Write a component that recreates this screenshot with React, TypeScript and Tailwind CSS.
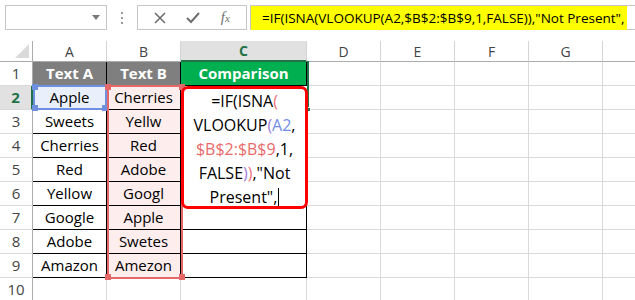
import React from 'react';

const aCol = ['Apple', 'Sweets', 'Cherries', 'Red', 'Yellow', 'Google', 'Adobe', 'Amazon'];
const bCol = ['Cherries', 'Yellw', 'Red', 'Adobe', 'Googl', 'Apple', 'Swetes', 'Amezon'];
const tail = ['D', 'E', 'F', 'G'];

function Corner({ className }: { className: string }) {
  return <div className={`absolute w-[6px] h-[6px] ${className}`} />;
}

function RowHead({ n, active }: { n: number; active?: boolean }) {
  return (
    <div
      className={`flex items-center justify-center border-b border-b-[#d9d9d9] ${
        active
          ? 'bg-[#e1e1e1] text-[#217346] font-bold border-r-2 border-r-[#217346]'
          : 'text-[#444] border-r border-r-[#ababab]'
      }`}
    >
      {n}
    </div>
  );
}

function EmptyTail() {
  return (
    <>
      {tail.map((c) => (
        <div key={c} className="border-r border-b border-[#d9d9d9]" />
      ))}
      <div className="border-b border-[#d9d9d9]" />
    </>
  );
}

// C2 being edited, wrapped over five rows
function FormulaCell() {
  return (
    <div className="row-span-5 relative z-20 self-start w-[127px] h-[123px] border-[3px] border-[#ff0000] rounded-[7px] bg-white text-center text-[16px] leading-[24px] text-black">
      <div>
        =IF(ISNA<span className="text-[#f0707c]">(</span>
      </div>
      <div>
        VLOOKUP<span className="text-[#a27dd8]">(</span>
        <span className="text-[#6f8fe6]">A2</span>,
      </div>
      <div>
        <span className="text-[#e86a6a]">$B$2:$B$9</span>,1,
      </div>
      <div>
        FALSE<span className="text-[#a27dd8]">)</span>
        <span className="text-[#f0707c]">)</span>,"Not
      </div>
      <div className="flex items-center justify-center">
        Present",<span className="inline-block w-[1px] h-[18px] bg-black ml-[1px]" />
      </div>
    </div>
  );
}

export default function App() {
  return (
    <div className="w-[635px] h-[300px] overflow-hidden bg-white font-['Open_Sans',sans-serif] text-[15px]">
      {/* formula bar */}
      <div className="h-[41px] flex items-start pt-[5px] pl-[5px]">
        <div className="w-[102px] h-[25px] border border-[#c6c6c6] flex items-center justify-end pr-[6px]">
          <svg width="8" height="5" viewBox="0 0 8 5">
            <path d="M0 0 H8 L4 5 Z" fill="#7a7a7a" />
          </svg>
        </div>
        <div className="w-[30px] h-[25px] flex flex-col items-center justify-center gap-[3px]">
          <div className="w-[2px] h-[2px] bg-[#9a9a9a]" />
          <div className="w-[2px] h-[2px] bg-[#9a9a9a]" />
          <div className="w-[2px] h-[2px] bg-[#9a9a9a]" />
        </div>
        <div className="w-[110px] h-[25px] border border-[#c6c6c6] flex items-center justify-around px-[6px]">
          <svg width="12" height="12" viewBox="0 0 12 12">
            <path d="M1 1 L11 11 M11 1 L1 11" stroke="#6e6e6e" strokeWidth="1.6" />
          </svg>
          <svg width="14" height="12" viewBox="0 0 14 12">
            <path d="M1 6 L5 10 L13 1" stroke="#6e6e6e" strokeWidth="2" fill="none" />
          </svg>
          <span className="font-['Liberation_Serif',serif] italic text-[#6e6e6e] text-[15px] leading-none">
            f<span className="text-[11px]">x</span>
          </span>
        </div>
        <div className="ml-[3px] flex-1 h-[25px] border-t border-b border-l border-[#c6c6c6] flex">
          <div className="w-[376px] h-[24px] bg-[#ffff00] flex items-center pl-[11px] text-[13.5px] text-black whitespace-nowrap">
            =IF(ISNA(VLOOKUP(A2,$B$2:$B$9,1,FALSE)),"Not Present",
          </div>
        </div>
      </div>

      {/* column headers */}
      <div className="h-[21px] flex text-[#444] text-[14px]">
        <div className="w-[33px] relative border-r border-b border-[#ababab]">
          <svg className="absolute right-[3px] bottom-[3px]" width="14" height="14" viewBox="0 0 14 14">
            <path d="M14 0 V14 H0 Z" fill="#dadada" />
          </svg>
        </div>
        <div className="w-[74px] flex items-center justify-center border-r border-r-[#d4d4d4] border-b border-b-[#ababab]">A</div>
        <div className="w-[74px] flex items-center justify-center border-r border-r-[#d4d4d4] border-b border-b-[#ababab]">B</div>
        <div className="w-[126px] flex items-center justify-center bg-[#e1e1e1] text-[#217346] font-bold border-r border-r-[#d4d4d4] border-b-2 border-b-[#217346]">C</div>
        {tail.map((c) => (
          <div key={c} className="w-[74px] flex items-center justify-center border-r border-r-[#d4d4d4] border-b border-b-[#ababab]">
            {c}
          </div>
        ))}
        <div className="flex-1 border-b border-b-[#ababab]" />
      </div>

      {/* sheet */}
      <div className="grid grid-cols-[33px_74px_74px_126px_74px_74px_74px_74px_1fr] auto-rows-[24px] text-black">
        <RowHead n={1} />
        <div className="flex items-center justify-center bg-[#7f7f7f] text-white font-bold border-r border-b border-black">Text A</div>
        <div className="flex items-center justify-center bg-[#7f7f7f] text-white font-bold border-r border-b border-black">Text B</div>
        <div className="flex items-center justify-center bg-[#00b050] text-white font-bold border-r border-b border-black">Comparison</div>
        <EmptyTail />

        {aCol.map((a, i) => {
          const row = i + 2;
          return (
            <React.Fragment key={row}>
              <RowHead n={row} active={row === 2} />
              <div className={`relative flex items-center justify-center border-r border-b border-black ${row === 2 ? 'bg-[#e9effb]' : ''}`}>
                {a}
                {row === 2 && (
                  <div className="absolute left-0 top-[-1px] w-[74px] h-[25px] border-2 border-[#6d90e0] z-10">
                    <Corner className="-left-[3px] -top-[3px] bg-[#6d90e0]" />
                    <Corner className="-left-[3px] -bottom-[3px] bg-[#6d90e0]" />
                    <Corner className="-right-[3px] -bottom-[3px] bg-[#6d90e0]" />
                  </div>
                )}
              </div>
              <div className="relative flex items-center justify-center bg-[#fdeded] border-r border-b border-black">
                {bCol[i]}
                {row === 2 && (
                  <div className="absolute left-0 top-[-1px] w-[76px] h-[194px] border-2 border-[#e46868] z-10">
                    <Corner className="-left-[4px] -top-[3px] bg-[#e46868]" />
                    <Corner className="-right-[4px] -top-[3px] bg-[#e46868]" />
                    <Corner className="-left-[4px] -bottom-[3px] bg-[#e46868]" />
                    <Corner className="-right-[4px] -bottom-[3px] bg-[#e46868]" />
                  </div>
                )}
              </div>
              {row === 2 && <FormulaCell />}
              {row >= 7 && <div className="border-r border-b border-black" />}
              {row === 2 ? (
                <>
                  <div className="relative border-r border-b border-[#d9d9d9]">
                    <div className="absolute left-0 top-[-25px] w-[2px] h-[49px] bg-[#217346]" />
                    <div className="absolute left-[-1px] top-[21px] w-[5px] h-[5px] bg-[#217346] border border-white" />
                  </div>
                  <div className="border-r border-b border-[#d9d9d9]" />
                  <div className="border-r border-b border-[#d9d9d9]" />
                  <div className="border-r border-b border-[#d9d9d9]" />
                  <div className="border-b border-[#d9d9d9]" />
                </>
              ) : (
                <EmptyTail />
              )}
            </React.Fragment>
          );
        })}

        <RowHead n={10} />
        <div className="border-r border-b border-[#d9d9d9]" />
        <div className="border-r border-b border-[#d9d9d9]" />
        <div className="border-r border-b border-[#d9d9d9]" />
        <EmptyTail />
      </div>
    </div>
  );
}
